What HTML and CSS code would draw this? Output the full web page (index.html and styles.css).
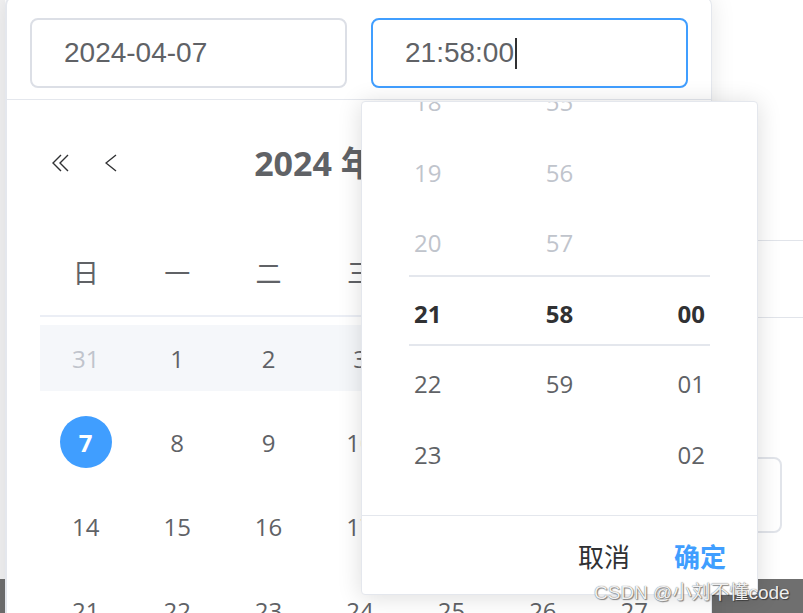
FILE: index.html
```html
<!DOCTYPE html>
<html lang="zh-CN">
<head>
<meta charset="utf-8">
<title>DateTime Picker</title>
<link rel="stylesheet" href="styles.css">
</head>
<body>
<div class="page">
  <div class="bg-table"></div>
  <div class="bg-input"></div>
  <div class="taskbar"></div>
</div>

<div class="picker">
  <div class="picker-head">
    <div class="field">2024-04-07</div>
    <div class="field is-focus">21:58:00<span class="caret"></span></div>
  </div>
  <div class="calendar">
    <div class="cal-head">
      <svg class="ico ico-d" viewBox="0 0 18 18"><path d="M10 1 L2 9 L10 17 M17 1 L9 9 L17 17"/></svg>
      <svg class="ico ico-s" viewBox="0 0 12 18"><path d="M11 1 L1 9 L11 17"/></svg>
      <div class="cal-title">2024 年 4 月</div>
      <svg class="ico ico-s" viewBox="0 0 12 18"><path d="M1 1 L11 9 L1 17"/></svg>
      <svg class="ico ico-d right" viewBox="0 0 18 18"><path d="M1 1 L9 9 L1 17 M8 1 L16 9 L8 17"/></svg>
    </div>
    <div class="week-head">
      <span>日</span><span>一</span><span>二</span><span>三</span><span>四</span><span>五</span><span>六</span>
    </div>
    <div class="date-row hover">
      <span class="cell prev">31</span><span class="cell">1</span><span class="cell">2</span><span class="cell">3</span><span class="cell">4</span><span class="cell">5</span><span class="cell">6</span>
    </div>
    <div class="date-row">
      <span class="cell"><b class="current">7</b></span><span class="cell">8</span><span class="cell">9</span><span class="cell">10</span><span class="cell">11</span><span class="cell">12</span><span class="cell">13</span>
    </div>
    <div class="date-row">
      <span class="cell">14</span><span class="cell">15</span><span class="cell">16</span><span class="cell">17</span><span class="cell">18</span><span class="cell">19</span><span class="cell">20</span>
    </div>
    <div class="date-row">
      <span class="cell">21</span><span class="cell">22</span><span class="cell">23</span><span class="cell">24</span><span class="cell">25</span><span class="cell">26</span><span class="cell">27</span>
    </div>
  </div>
</div>

<div class="time-popup">
  <div class="spinner">
    <div class="col">
      <div class="list">
        <div class="item past">18</div>
        <div class="item past">19</div>
        <div class="item past">20</div>
        <div class="item active">21</div>
        <div class="item">22</div>
        <div class="item">23</div>
      </div>
    </div>
    <div class="col">
      <div class="list">
        <div class="item past">55</div>
        <div class="item past">56</div>
        <div class="item past">57</div>
        <div class="item active">58</div>
        <div class="item">59</div>
      </div>
    </div>
    <div class="col">
      <div class="list">
        <div class="spacer"></div>
        <div class="item active">00</div>
        <div class="item">01</div>
        <div class="item">02</div>
      </div>
    </div>
  </div>
  <div class="time-foot">
    <span class="btn cancel">取消</span>
    <span class="btn confirm">确定</span>
  </div>
</div>

<div class="watermark">CSDN @小刘不懂code</div>
</body>
</html>
```

FILE: styles.css
```css
html, body {
  margin: 0;
  padding: 0;
}
body {
  width: 803px;
  height: 613px;
  overflow: hidden;
  background: #ffffff;
  position: relative;
  font-family: "Open Sans", "Noto Sans CJK SC", sans-serif;
}

/* underlying page */
.page {
  height: 613px;
  display: flex;
  flex-direction: column;
  box-shadow: inset 5px 0 0 #f2f2f3;
}
.bg-table {
  margin-top: 240px;
  margin-left: 420px;
  height: 76px;
  border-top: 1px solid #e1e4ea;
  border-bottom: 1px solid #e1e4ea;
}
.bg-input {
  margin-top: 139px;
  margin-left: 420px;
  width: 362px;
  height: 76px;
  box-sizing: border-box;
  border: 2px solid #e1e4ea;
  border-radius: 8px;
}
.taskbar {
  margin-top: auto;
  height: 34px;
  background: #6f6f6f;
}

/* date picker panel */
.picker {
  position: absolute;
  left: 5px;
  top: -3px;
  width: 704px;
  height: 700px;
  background: #fff;
  border: 1px solid #e4e7ed;
  border-left-width: 2px;
  border-radius: 8px;
  box-shadow: 0 0 24px rgba(0, 0, 0, 0.10);
}
.picker-head {
  display: flex;
  gap: 24px;
  padding: 20px 23px 11px;
  border-bottom: 1px solid #e4e7ed;
}
.field {
  flex: 1;
  height: 70px;
  box-sizing: border-box;
  border: 2px solid #dcdfe6;
  border-radius: 8px;
  padding-left: 32px;
  font-family: "Liberation Sans", Arial, sans-serif;
  font-size: 28px;
  line-height: 66px;
  color: #606266;
  display: flex;
  align-items: center;
}
.field.is-focus {
  border-color: #409eff;
}
.caret {
  display: inline-block;
  width: 2px;
  height: 31px;
  margin-left: 1px;
  background: #303133;
}

.calendar {
  padding: 25px 31px 0 33px;
}
.cal-head {
  height: 76px;
  display: flex;
  align-items: center;
  padding: 0 11px;
}
.ico {
  height: 18px;
  fill: none;
  stroke: #303133;
  stroke-width: 1.4;
}
.ico-d { width: 18px; }
.ico-s { width: 12px; margin-left: 36px; }
.ico-s + .ico-d { margin-left: 36px; }
.cal-head .cal-title + .ico-s { margin-left: 0; }
.cal-title {
  flex: 1;
  text-align: center;
  padding-right: 20px;
  font-size: 34px;
  font-weight: 700;
  color: #606266;
  line-height: 40px;
}
.week-head {
  margin-top: 27px;
  display: grid;
  grid-template-columns: repeat(7, 1fr);
  height: 87px;
  border-bottom: 2px solid #ebeef5;
  align-items: center;
  text-align: center;
  font-family: "Noto Sans CJK SC", sans-serif;
  font-size: 26px;
  color: #606266;
}
.date-row {
  display: grid;
  grid-template-columns: repeat(7, 1fr);
  height: 66px;
  margin-bottom: 18px;
  align-items: center;
  text-align: center;
  font-size: 24px;
  color: #606266;
}
.week-head + .date-row {
  margin-top: 8px;
}
.date-row.hover {
  background: #f5f7fa;
}
.cell.prev {
  color: #c0c4cc;
}
.current {
  display: inline-flex;
  width: 52px;
  height: 52px;
  border-radius: 50%;
  background: #409eff;
  color: #fff;
  align-items: center;
  justify-content: center;
  font-weight: 700;
}

/* time popup */
.time-popup {
  position: absolute;
  left: 361px;
  top: 101px;
  width: 397px;
  height: 494px;
  box-sizing: border-box;
  background: #fff;
  border: 1px solid #e4e7ed;
  border-radius: 4px;
  box-shadow: 0 2px 24px rgba(0, 0, 0, 0.14);
}
.spinner {
  position: relative;
  height: 413px;
  display: flex;
  overflow: hidden;
}
.spinner::before {
  content: "";
  position: absolute;
  left: 12%;
  right: 12%;
  top: 173px;
  height: 67px;
  border-top: 2px solid #e4e7ed;
  border-bottom: 2px solid #e4e7ed;
  pointer-events: none;
}
.col {
  flex: 1;
  text-align: center;
}
.list {
  margin-top: -35px;
}
.spacer {
  height: 211.5px;
}
.item {
  height: 70.5px;
  line-height: 70.5px;
  font-size: 24px;
  color: #606266;
}
.item.past {
  color: #c0c4cc;
}
.item.active {
  color: #303133;
  font-weight: 700;
}
.time-foot {
  height: 78px;
  border-top: 1px solid #e4e7ed;
  display: flex;
  justify-content: flex-end;
  align-items: center;
  gap: 44px;
  padding-right: 31px;
  font-family: "Noto Sans CJK SC", sans-serif;
  font-size: 26px;
}
.btn.cancel {
  color: #303133;
}
.btn.confirm {
  color: #409eff;
  font-weight: 700;
}

.watermark {
  position: absolute;
  left: 594px;
  top: 581px;
  font-family: "Liberation Sans", "Noto Sans CJK SC", sans-serif;
  font-size: 19px;
  line-height: 24px;
  color: rgba(255, 255, 255, 0.92);
  text-shadow: 0 0 1px #555, 1px 1px 1px rgba(0, 0, 0, 0.45);
  white-space: nowrap;
}
```
